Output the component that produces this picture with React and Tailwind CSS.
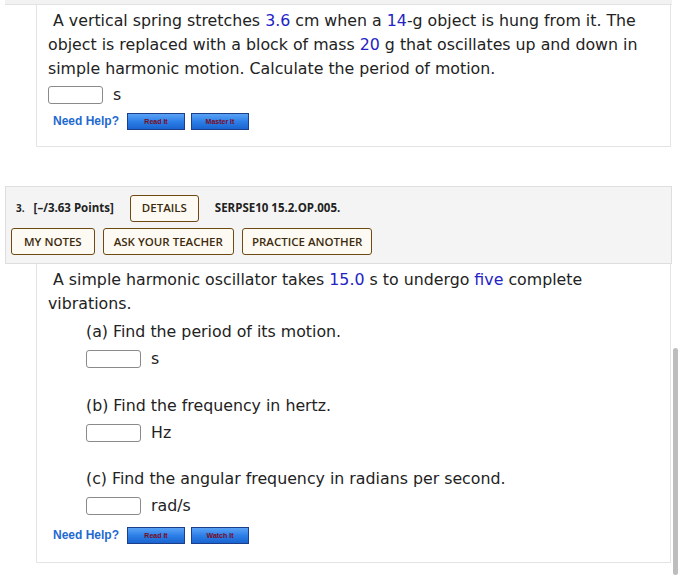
import React from 'react';

const body = { fontFamily: '"DejaVu Sans", Verdana, sans-serif' };
const head = { fontFamily: '"Open Sans", "Liberation Sans", sans-serif' };

function Num({ children }) {
    return <span className="text-[#2323c4]">{children}</span>;
}

function AnswerBox({ unit }) {
    return (
        <div className="flex items-center gap-[10px] h-[18px]">
            <div className="w-[55px] h-[18px] border border-[#8a8a8a] rounded-[3px] bg-white"></div>
            <span>{unit}</span>
        </div>
    );
}

function HelpButton({ label }) {
    return (
        <div className="w-[58px] h-[17px] border border-[#1c3f8c] bg-gradient-to-b from-[#5aa2f5] via-[#2d7fe8] to-[#1a64d0] flex items-center justify-center">
            <span className="text-[7px] font-bold text-[#7a0a1c] leading-none" style={{ fontFamily: '"Liberation Sans", Arial, sans-serif' }}>{label}</span>
        </div>
    );
}

function NeedHelp({ second }) {
    return (
        <div className="flex items-center gap-[6px] h-[18px]">
            <span className="text-[12px] font-bold text-[#1d6ad0] mr-[2px]" style={{ fontFamily: '"Liberation Sans", Arial, sans-serif' }}>Need Help?</span>
            <HelpButton label="Read It" />
            <HelpButton label={second} />
        </div>
    );
}

function OutlineButton({ children, className = '' }) {
    return (
        <div className={`h-[27px] border-[1.5px] border-[#6e4a12] rounded-[3px] bg-[#fdfaf3] flex items-center text-[11.5px] font-semibold text-[#3d2a0c] ${className}`}>
            {children}
        </div>
    );
}

export default function App() {
    return (
        <div className="w-[682px] h-[575px] bg-white overflow-hidden relative text-[#222]">
            <div className="ml-[5px] w-[667px]">

                {/* previous question */}
                <div className="h-[5px] bg-[#f2f2f2] border-b border-[#e2e2e2]"></div>
                <div className="ml-[31px] w-[635px] border-x border-b border-[#e4e4e4] h-[142px] pl-[11px] pr-[20px] pt-[4px] text-[15.8px] leading-[24px]" style={body}>
                    <p>&nbsp;A vertical spring stretches <Num>3.6</Num> cm when a <Num>14</Num>-g object is hung from it. The object is replaced with a block of mass <Num>20</Num> g that oscillates up and down in simple harmonic motion. Calculate the period of motion.</p>
                    <div className="mt-[5px]"><AnswerBox unit="s" /></div>
                    <div className="mt-[8px] pl-[5px]"><NeedHelp second="Master It" /></div>
                </div>

                {/* question 3 header */}
                <div className="mt-[39px] bg-[#f4f4f4] border border-[#dedede] h-[78px] pl-[10px] pt-[7px]" style={head}>
                    <div className="flex items-center h-[28px]">
                        <span className="text-[10px] font-bold text-[#222]">3.</span>
                        <span className="text-[11.5px] font-bold text-[#222] ml-[9px]">[–/3.63 Points]</span>
                        <OutlineButton className="ml-[16px] px-[11px]">DETAILS</OutlineButton>
                        <span className="text-[11.5px] font-bold text-[#222] ml-[16px]">SERPSE10 15.2.OP.005.</span>
                    </div>
                    <div className="flex items-center gap-[8px] mt-[6px] -ml-[5px]">
                        <OutlineButton className="px-[12px]">MY NOTES</OutlineButton>
                        <OutlineButton className="px-[10px]">ASK YOUR TEACHER</OutlineButton>
                        <OutlineButton className="px-[9px]">PRACTICE ANOTHER</OutlineButton>
                    </div>
                </div>

                {/* question 3 body */}
                <div className="ml-[31px] w-[635px] border-x border-b border-[#e4e4e4] h-[299px] pl-[11px] pr-[20px] pt-[4px] text-[15.8px] leading-[24px]" style={body}>
                    <p>&nbsp;A simple harmonic oscillator takes <Num>15.0</Num> s to undergo <Num>five</Num> complete vibrations.</p>
                    <div className="pl-[38px]">
                        <p className="mt-[4px]">(a) Find the period of its motion.</p>
                        <div className="mt-[6px]"><AnswerBox unit="s" /></div>
                        <p className="mt-[26px]">(b) Find the frequency in hertz.</p>
                        <div className="mt-[6px]"><AnswerBox unit="Hz" /></div>
                        <p className="mt-[25px]">(c) Find the angular frequency in radians per second.</p>
                        <div className="mt-[6px]"><AnswerBox unit="rad/s" /></div>
                    </div>
                    <div className="mt-[11px] pl-[5px]"><NeedHelp second="Watch It" /></div>
                </div>
            </div>

            {/* scrollbar */}
            <div className="absolute left-[673px] top-[348px] w-[5px] h-[227px] rounded-full bg-[#bdbdbd]"></div>
        </div>
    );
}
